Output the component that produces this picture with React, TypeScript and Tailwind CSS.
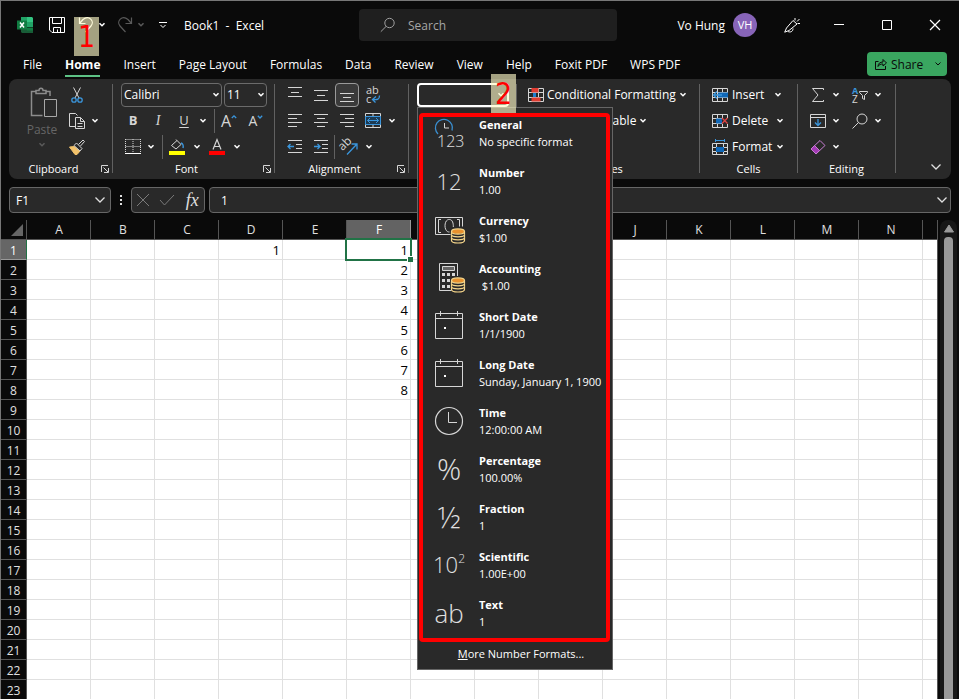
import type { ReactNode } from 'react';

const TABS = ['File', 'Home', 'Insert', 'Page Layout', 'Formulas', 'Data', 'Review', 'View', 'Help', 'Foxit PDF', 'WPS PDF'];
const COLUMNS = ['A', 'B', 'C', 'D', 'E', 'F', 'G', 'H', 'I', 'J', 'K', 'L', 'M', 'N'];
const ROWS = Array.from({ length: 23 }, (_, i) => i + 1);

const FORMATS = [
  { name: 'General', sample: 'No specific format', icon: <GeneralIcon /> },
  { name: 'Number', sample: '1.00', icon: <Glyph size="text-[22px]">12</Glyph> },
  { name: 'Currency', sample: '$1.00', icon: <CurrencyIcon /> },
  { name: 'Accounting', sample: '\u00a0$1.00', icon: <AccountingIcon /> },
  { name: 'Short Date', sample: '1/1/1900', icon: <CalendarIcon /> },
  { name: 'Long Date', sample: 'Sunday, January 1, 1900', icon: <CalendarIcon /> },
  { name: 'Time', sample: '12:00:00 AM', icon: <TimeIcon /> },
  { name: 'Percentage', sample: '100.00%', icon: <Glyph size="text-3xl">%</Glyph> },
  { name: 'Fraction', sample: '1', icon: <Glyph size="text-3xl">½</Glyph> },
  {
    name: 'Scientific',
    sample: '1.00E+00',
    icon: (
      <Glyph size="text-[22px]">
        10<sup className="text-xs -top-2.5">2</sup>
      </Glyph>
    ),
  },
  { name: 'Text', sample: '1', icon: <Glyph size="text-[26px]">ab</Glyph> },
];

function cellValue(col: string, row: number) {
  if (col === 'F' && row <= 8) return row;
  if (col === 'D' && row === 1) return 1;
  return '';
}

function Icon({ w = 16, h = 16, children }: { w?: number; h?: number; children: ReactNode }) {
  return (
    <svg width={w} height={h} viewBox={`0 0 ${w} ${h}`} fill="none" stroke="#d6d6d6" className="shrink-0 overflow-visible" aria-hidden="true">
      {children}
    </svg>
  );
}

function Chevron({ dim = false }: { dim?: boolean }) {
  return (
    <svg width="8" height="6" viewBox="0 0 8 6" fill="none" stroke={dim ? '#5a5a5a' : '#fff'} strokeWidth="1.5" className="shrink-0" aria-hidden="true">
      <path d="M1.5 1.2 4 3.7l2.5-2.5" />
    </svg>
  );
}

function WideChevron() {
  return (
    <svg width="12" height="8" viewBox="0 0 12 8" fill="none" stroke="#e0e0e0" strokeWidth="1.3" className="shrink-0" aria-hidden="true">
      <path d="m1.5 1.5 4.5 4.5 4.5-4.5" />
    </svg>
  );
}

function Glyph({ size, children }: { size: string; children: ReactNode }) {
  return <span className={`${size} font-light leading-none text-[#e0e0e0] whitespace-nowrap`}>{children}</span>;
}

function Coins() {
  return (
    <g stroke="#f5d58a" strokeWidth="1.2" fill="#292929">
      <path d="M17.5 15.5v9c0 1.5 3 2.5 6.5 2.5s6.5-1 6.5-2.5v-9" />
      <path d="M17.5 18.5c0 1.5 3 2.3 6.5 2.3s6.5-.8 6.5-2.3M17.5 21.5c0 1.5 3 2.3 6.5 2.3s6.5-.8 6.5-2.3" />
      <ellipse cx="24" cy="15.5" rx="6.5" ry="2.6" fill="#e8912d" />
    </g>
  );
}

function GeneralIcon() {
  return (
    <Icon w={32} h={32}>
      <path d="M5 17A8.5 8.5 0 1 1 19 13.5" stroke="#3a8fd0" strokeWidth="1.3" />
      <path d="M11.5 6v5H16" />
      <text x="4" y="30" fontSize="16" fill="#e0e0e0" stroke="none" fontWeight="300">123</text>
    </Icon>
  );
}

function CurrencyIcon() {
  return (
    <Icon w={30} h={28}>
      <path d="M28.5 11.5v-9h-27v17h15" />
      <path d="M7 4.5H4.5v13H7M23 4.5h2.5v7" />
      <path d="M15.5 17c-6 .5-6-13 0-12.5 3 0 4 4 3.8 7.5" />
      <g transform="translate(0 1)"><Coins /></g>
    </Icon>
  );
}

function AccountingIcon() {
  return (
    <Icon w={30} h={32}>
      <path d="M23.5 15V2.5h-18v27h12" />
      <path d="M8.5 5.5h12v4h-12z" fill="#666" />
      <path d="M8 12h3v3H8zM13 12h3v3h-3zM18 12h3v3h-3zM8 18h3v3H8zM13 18h3v3h-3zM8 24h3v3H8zM13 24h3v3h-3z" fill="#d6d6d6" stroke="none" />
      <g transform="translate(0 4)"><Coins /></g>
    </Icon>
  );
}

function CalendarIcon() {
  return (
    <Icon w={32} h={32}>
      <path d="M2.5 4.5h27v25h-27zM2.5 9.5h27M7.5 2v5M24.5 2v5" />
      <path d="M11 18h2v2h-2z" fill="#fff" stroke="none" />
    </Icon>
  );
}

function TimeIcon() {
  return (
    <Icon w={32} h={32}>
      <circle cx="16" cy="16" r="13.5" strokeWidth="1.2" />
      <path d="M15.5 7v10.5H24" />
    </Icon>
  );
}

function Lines({ rows }: { rows: [number, number, number][] }) {
  return (
    <Icon>
      {rows.map(([x1, x2, y]) => (
        <path key={y} d={`M${x1} ${y}.5H${x2}`} />
      ))}
    </Icon>
  );
}

function Tool({ label, width, children }: { label: string; width: string; children: ReactNode }) {
  return (
    <button aria-label={label} className={`${width} h-6 flex items-center justify-center shrink-0`}>
      {children}
    </button>
  );
}

function More({ label, dim }: { label: string; dim?: boolean }) {
  return (
    <button aria-label={label} className="w-3 h-6 flex items-center justify-center shrink-0">
      <Chevron dim={dim} />
    </button>
  );
}

function Rule() {
  return <div className="w-px h-6 bg-[#616161] shrink-0" />;
}

function Row({ children }: { children: ReactNode }) {
  return <div className="flex items-center h-[26px]">{children}</div>;
}

function Group({ label, width, pad, launcher, children }: { label?: string; width: string; pad: string; launcher?: boolean; children: ReactNode }) {
  return (
    <>
      <div className={`${width} shrink-0 flex flex-col pt-[3px]`}>
        <div className={`${pad} h-[78px]`}>{children}</div>
        <div className={`relative text-center leading-[18px] text-[11px] ${launcher ? 'pr-3.5' : ''}`}>
          {label}
          {launcher && (
            <button aria-label={`${label} settings`} className="absolute right-[2px] top-1">
              <Icon w={10} h={10}>
                <path d="M1.5 8V1.5H8M3.5 3.5 8 8M8.5 4v4.5H4" />
              </Icon>
            </button>
          )}
        </div>
      </div>
      <div className="w-px mt-[5px] mb-[6px] bg-[#616161] shrink-0" />
    </>
  );
}

function Dropdown({ label, value, width }: { label: string; value: string; width: string }) {
  return (
    <label className={`${width} relative flex items-center`}>
      <select aria-label={label} defaultValue={value} className="appearance-none w-full h-6 rounded border border-[#6b6b6b] bg-[#292929] px-[2px] text-xs leading-5">
        <option>{value}</option>
      </select>
      <span className="absolute right-[2px] pointer-events-none"><Chevron /></span>
    </label>
  );
}

function Callout({ place, children }: { place: string; children: ReactNode }) {
  return (
    <span className={`${place} absolute z-30 w-[25px] h-[39px] bg-[#fffbc8]/63 text-center text-[30px] leading-[39px] text-[#ff0000] font-['DejaVu_Sans_Condensed','DejaVu_Sans',sans-serif]`}>
      {children}
    </span>
  );
}

function TitleBar() {
  return (
    <header className="flex items-center h-12 shrink-0 text-xs">
      <div className="flex items-center w-[358px] shrink-0 pl-4">
        <svg width="16" height="16" viewBox="0 0 16 16" aria-hidden="true">
          <path d="M4 0h6v8H4z" fill="#21a366" />
          <path d="M10 0h5l1 1v4h-6z" fill="#33c481" />
          <path d="M4 4.5h6V12H4z" fill="#107c41" />
          <path d="M10 5h6v5h-6z" fill="#21a366" />
          <path d="M4 11h12v5H5l-1-1z" fill="#185c37" />
          <path d="M10 10.500h6v3h-6z" fill="#107c41" />
          <path d="M0 3.500h10v9H0z" fill="#107c41" />
          <path d="m3 5.500 4 5M7 5.500l-4 5" stroke="#fff" strokeWidth="1.500" />
        </svg>
        <button aria-label="Save" className="ml-4">
          <Icon>
            <path d="M.5.5h15v15H3L.5 13zM3.500.5v6h9v-6M4.500 15.500v-5h7v5M8.500 12.500v3" stroke="#fff" />
          </Icon>
        </button>
        <div className="relative ml-3 flex items-center">
          <button aria-label="Undo" className="w-[18px] flex justify-center">
            <Icon>
              <path d="M1.500.5v6h6M1.500 6.500 5 2.500c6-5 12 2 8 6.500L7.500 15" stroke="#fff" strokeWidth="1.2" />
            </Icon>
          </button>
          <span className="w-px" />
          <More label="Undo history" />
          <Callout place="-left-[3px] top-1">1</Callout>
        </div>
        <button aria-label="Redo" className="ml-[9px]">
          <Icon>
            <path d="M14.500.5v6h-6M14.500 6.500 11 2.500C5-2.500-1 4.500 3 9l5.500 6" stroke="#5a5a5a" strokeWidth="1.2" />
          </Icon>
        </button>
        <span className="w-[2px]" />
        <More label="Redo history" dim />
        <button aria-label="Customize toolbar" className="ml-3">
          <Icon w={8} h={8}>
            <path d="M0 1.500h8M1.500 4 4 6.500 6.500 4" stroke="#fff" />
          </Icon>
        </button>
        <h1 className="ml-[17px] pt-px whitespace-pre">Book1  -  Excel</h1>
      </div>
      <label className="flex items-center gap-3 w-[258px] h-8 rounded bg-[#1f1f1f] pl-[21px]">
        <Icon>
          <circle cx="9.5" cy="6" r="4.7" stroke="#a0a0a0" />
          <path d="M6 9.500.8 14.700" stroke="#a0a0a0" />
        </Icon>
        <input aria-label="Search" placeholder="Search" className="w-full pt-px bg-transparent placeholder:text-[#a6a6a6] text-xs outline-none" />
      </label>
      <div className="ml-auto flex items-center">
        <span className="pt-px">Vo Hung</span>
        <button className="ml-2 size-6 rounded-full bg-[#8764b8] text-[11px]">VH</button>
        <button aria-label="Drawing" className="ml-[27px]">
          <Icon>
            <path d="M9 3.500 2.500 11 .7 15.200 5 13.500l8-6.500zM4 14.500c2 1 5 .5 5-3M11 3.500V1M13 4.500 15.500 2M13.500 6.500H16" stroke="#fff" />
          </Icon>
        </button>
        <button aria-label="Minimize" className="ml-[34px]">
          <Icon w={10} h={10}><path d="M0 4.500h10" stroke="#fff" /></Icon>
        </button>
        <button aria-label="Maximize" className="ml-[38px]">
          <Icon w={10} h={10}><path d="M.5.5h9v9h-9z" stroke="#fff" /></Icon>
        </button>
        <button aria-label="Close" className="ml-[38px] mr-[19px]">
          <Icon w={10} h={10}><path d="m0 0 10 10M10 0 0 10" stroke="#fff" strokeWidth="1.2" /></Icon>
        </button>
      </div>
    </header>
  );
}

function TabBar() {
  return (
    <nav className="flex items-center h-[30px] shrink-0 pl-[22px] pr-3 text-xs">
      <div className="flex gap-[23px] whitespace-nowrap">
        {TABS.map((tab) => (
          <a key={tab} href="#" className={tab === 'Home' ? 'h-[26px] pt-1 leading-5 font-bold border-b-2 border-[#5dc285]' : 'h-[26px] pt-1 leading-5'}>
            {tab}
          </a>
        ))}
      </div>
      <button className="ml-auto flex items-center h-6 w-20 rounded bg-[#3aa660] text-[#0a0a0a] pl-2">
        <Icon w={12} h={12}>
          <path d="M3.500 3.500h-3v8h10V8M3 8.500c0-3 2-4.500 5-4.500V1.500L11.500 5 8 8V6C5.500 6 4 6.500 3 8.500z" stroke="#0a0a0a" />
        </Icon>
        <span className="ml-1 pt-px">Share</span>
        <svg width="8" height="6" viewBox="0 0 8 6" fill="none" stroke="#0a0a0a" className="ml-auto mr-[5px]" aria-hidden="true">
          <path d="M1.5 1.5 4 4l2.5-2.5" />
        </svg>
      </button>
    </nav>
  );
}

function FormatMenu() {
  return (
    <div id="formats" className="absolute left-0 top-6 z-20 w-[196px] border border-[#666] bg-[#292929] text-xs">
      <ul className="py-px">
        {FORMATS.map((format) => (
          <li key={format.name}>
            <button className="flex items-center w-full h-12 text-left whitespace-nowrap">
              <span className="w-[61px] pl-px shrink-0 flex justify-center">{format.icon}</span>
              <span className="leading-[17px] text-[11px]">
                <b className="block">{format.name}</b>
                {format.sample}
              </span>
            </button>
          </li>
        ))}
      </ul>
      <button className="block w-full h-[31px] pt-px pl-3 text-center text-[11px]">
        <u>M</u>ore Number Formats...
      </button>
      <div className="absolute left-px top-[5px] w-[191px] h-[529px] rounded border-4 border-[#ff0000] pointer-events-none" />
    </div>
  );
}

function Grid3({ children }: { children?: ReactNode }) {
  return (
    <Icon>
      <path d="M.5 1.5h15v13H.5zM.5 5.5h15M.5 10.5h15M5.5 1.5v13M10.5 1.5v13" />
      {children}
    </Icon>
  );
}

function Ribbon() {
  return (
    <div className="relative flex h-[100px] shrink-0 mx-2 rounded-lg bg-[#292929] text-xs">
      <Group label="Clipboard" width="w-[103px]" pad="flex pl-4" launcher>
        <button className="flex flex-col items-center w-[34px] pt-[5px] text-[#666]">
          <Icon w={24} h={32}>
            <path d="M5.5 4.5h-4v24h11M20 9V4.500h-4M6 6.500h10v-3h-3c0-3-4-3-4 0H6z" stroke="#8c8c8c" strokeWidth="1.500" />
            <path d="M14.500 12.500h12v17h-12z" stroke="#a8a8a8" />
          </Icon>
          <span className="mt-[3px] mb-1 leading-4">Paste</span>
          <Chevron dim />
        </button>
        <div className="pl-2">
          <Row>
            <Tool label="Cut" width="w-5">
              <Icon>
                <path d="M4.500.5 10 11M11.500.5 6 11" />
                <circle cx="5" cy="13" r="2.2" stroke="#3a96dd" strokeWidth="1.3" />
                <circle cx="11" cy="13" r="2.2" stroke="#3a96dd" strokeWidth="1.3" />
              </Icon>
            </Tool>
          </Row>
          <Row>
            <Tool label="Copy" width="w-5">
              <Icon>
                <path d="M6 13.500H.5V.5h6l2 2M6.500 4.500h5l4 4v7h-9zM11.500 4.500v4h4M8.500 10.500h5M8.500 13.500h5" />
              </Icon>
            </Tool>
            <span className="w-[2px]" />
            <More label="Copy options" />
          </Row>
          <Row>
            <Tool label="Format painter" width="w-5">
              <Icon>
                <path d="m.5 8 5-.5 5.500 4.500-3 3.500H6z" fill="#f2c26b" stroke="#f2c26b" />
                <path d="M5 6.500 7.500 4l5.500 5.500L11 12zM9.500 5.500 14 1l1.500 1.500L11.500 7" fill="#292929" />
              </Icon>
            </Tool>
          </Row>
        </div>
      </Group>

      <Group label="Font" width="w-[161px]" pad="pl-2" launcher>
        <Row>
          <div className="flex gap-[2px]">
            <Dropdown label="Font name" value="Calibri" width="w-[101px]" />
            <Dropdown label="Font size" value="11" width="w-[43px]" />
          </div>
        </Row>
        <Row>
          <Tool label="Bold" width="w-6"><b className="text-[13px] text-[#d6d6d6]">B</b></Tool>
          <Tool label="Italic" width="w-[26px]"><i className="text-sm text-[#d6d6d6] font-['Liberation_Serif',serif]">I</i></Tool>
          <Tool label="Underline" width="w-[26px]"><u className="text-[13px] text-[#d6d6d6] underline-offset-2">U</u></Tool>
          <More label="Underline style" />
          <span className="w-[5px]" />
          <Rule />
          <Tool label="Grow font" width="w-7">
            <span className="text-base text-[#d6d6d6]">A</span>
            <Icon w={6} h={14}><path d="M.8 4 3 1.800 5.200 4" stroke="#3a96dd" strokeWidth="1.3" /></Icon>
          </Tool>
          <Tool label="Shrink font" width="w-[26px]">
            <span className="text-sm text-[#d6d6d6]">A</span>
            <Icon w={6} h={14}><path d="M.8 1.800 3 4l2.200-2.200" stroke="#3a96dd" strokeWidth="1.3" /></Icon>
          </Tool>
        </Row>
        <Row>
          <Tool label="Borders" width="w-6">
            <Icon>
              <path d="M.5.5h15M.5 7.500h15M.5 0v13M8 0v13M15.500 0v13" strokeDasharray="1 1" />
              <path d="M0 14.500h16" stroke="#fff" />
            </Icon>
          </Tool>
          <More label="Border styles" />
          <span className="w-[5px]" />
          <Rule />
          <Tool label="Fill color" width="w-7">
            <Icon>
              <path d="m7 .5 5 5-5 4.500L2.500 6.500 8 1.500" />
              <path d="M12 4c2 .5 2.500 3 2 5" stroke="#3a96dd" strokeWidth="1.5" />
              <path d="M0 12h16v4H0z" fill="#ff0" stroke="none" />
            </Icon>
          </Tool>
          <More label="Fill colors" />
          <Tool label="Font color" width="w-7">
            <Icon>
              <path d="M4 10.500 8 .5l4 10M5.500 7.500h5" strokeWidth="1.2" />
              <path d="M0 12h16v4H0z" fill="#f00" stroke="none" />
            </Icon>
          </Tool>
          <More label="Font colors" />
        </Row>
      </Group>

      <Group label="Alignment" width="w-[133px]" pad="pl-[7px]" launcher>
        <Row>
          <Tool label="Top align" width="w-[26px]"><Lines rows={[[1, 15, 0], [4, 12, 5], [1, 15, 9]]} /></Tool>
          <Tool label="Middle align" width="w-[26px]"><Lines rows={[[1, 15, 3], [4, 12, 8], [1, 15, 13]]} /></Tool>
          <button aria-label="Bottom align" className="w-6 h-6 mx-px flex items-center justify-center rounded border border-[#9a9a9a] bg-[#3a3a3a]">
            <Lines rows={[[1, 15, 6], [4, 12, 10], [1, 15, 14]]} />
          </button>
          <Tool label="Wrap text" width="w-[26px]">
            <Icon>
              <text x="1" y="7" fontSize="11" fill="#d6d6d6" stroke="none">ab</text>
              <text x="1" y="16" fontSize="11" fill="#d6d6d6" stroke="none">c</text>
              <path d="M14.500 8.500c0 4-2 4.500-6.500 4M11 9.500l-3.500 3 3 3" stroke="#3a96dd" strokeWidth="1.3" />
            </Icon>
          </Tool>
        </Row>
        <Row>
          <Tool label="Align left" width="w-[26px]"><Lines rows={[[1, 15, 1], [1, 10, 5], [1, 15, 9], [1, 10, 13]]} /></Tool>
          <Tool label="Center" width="w-[26px]"><Lines rows={[[1, 15, 1], [4, 12, 5], [1, 15, 9], [4, 12, 13]]} /></Tool>
          <Tool label="Align right" width="w-[26px]"><Lines rows={[[1, 15, 1], [6, 15, 5], [1, 15, 9], [6, 15, 13]]} /></Tool>
          <Tool label="Merge and center" width="w-[26px]">
            <Icon>
              <path d="M.5.5h15v14H.5zM8 .5v3M8 11.500v3" />
              <path d="M.5 3.500h15v8H.5z" stroke="#3a96dd" fill="#1d3a52" />
              <path d="M2.500 7.500h11M5 5 2.500 7.500 5 10M11 5l2.500 2.500L11 10" stroke="#3a96dd" />
            </Icon>
          </Tool>
          <More label="Merge options" />
        </Row>
        <Row>
          <Tool label="Decrease indent" width="w-[26px]">
            <Icon>
              <path d="M1 1.500h14M9 5.500h6M9 9.500h6M1 13.500h14" />
              <path d="M1 7.500h6M3.500 5 1 7.500 3.500 10" stroke="#3a96dd" strokeWidth="1.3" />
            </Icon>
          </Tool>
          <Tool label="Increase indent" width="w-[26px]">
            <Icon>
              <path d="M1 1.500h14M9 5.500h6M9 9.500h6M1 13.500h14" />
              <path d="M1 7.500h6M4.500 5 7 7.500 4.500 10" stroke="#3a96dd" strokeWidth="1.3" />
            </Icon>
          </Tool>
          <Rule />
          <Tool label="Orientation" width="w-7">
            <Icon>
              <text x="-2" y="8" fontSize="12" fill="#d6d6d6" stroke="none" transform="rotate(-45 5 6)">ab</text>
              <path d="M6 15.500 15.500 5.500M10.500 5H16v5.500" stroke="#3a96dd" strokeWidth="1.3" />
            </Icon>
          </Tool>
          <More label="Orientation options" />
        </Row>
      </Group>

      <Group width="w-[107px]" pad="pl-2">
        <Row>
          <div className="relative flex items-center">
            <input role="combobox" aria-label="Number format" aria-expanded="true" aria-controls="formats" className="w-[92px] h-6 rounded border-2 border-white bg-[#292929] px-1 outline-none" />
            <span className="absolute right-1"><Chevron /></span>
            <FormatMenu />
            <Callout place="left-[74px] -top-[9px]">2</Callout>
          </div>
        </Row>
      </Group>

      <Group label="Styles" width="w-[182px]" pad="pl-[11px]">
        <Row>
          <button className="flex items-center gap-[3px] whitespace-nowrap">
            <Grid3>
              <path d="M3.500 1h7v4.500h-7zM3.500 10.500h9v4h-9z" fill="#e03c31" stroke="none" />
              <path d="M5 6h3v4H5z" fill="#1f7fd1" stroke="none" />
            </Grid3>
            Conditional Formatting
            <Chevron />
          </button>
        </Row>
        <Row>
          <button className="flex items-center gap-[3px] whitespace-nowrap">
            <Grid3 />
            Format as Table
            <Chevron />
          </button>
        </Row>
      </Group>

      <Group label="Cells" width="w-[97px]" pad="pl-3">
        <Row>
          <button className="flex items-center gap-1 w-[70px]">
            <Grid3>
              <path d="M6 5.500h10v5H6z" fill="#1068b8" stroke="none" />
              <path d="M10 8H1.500M5 4.500 1.500 8 5 11.500" stroke="#3a96dd" strokeWidth="1.3" />
            </Grid3>
            Insert
            <span className="ml-auto"><Chevron /></span>
          </button>
        </Row>
        <Row>
          <button className="flex items-center gap-1 w-[72px]">
            <Grid3>
              <path d="M4 5.500h6v5H4z" fill="#1068b8" stroke="none" />
              <path d="M10 5h6v6h-6z" fill="#292929" stroke="none" />
              <path d="m10 5 5.500 5.500M15.500 5 10 10.500" stroke="#e04545" strokeWidth="1.3" />
            </Grid3>
            Delete
            <span className="ml-auto"><Chevron /></span>
          </button>
        </Row>
        <Row>
          <button className="flex items-center gap-1 w-[70px]">
            <Icon>
              <path d="M.5 4.500h15v11H.5zM.5 8.500h15M.5 12.500h15M4.500 4.500v11M11.500 4.500v11" />
              <path d="M4 8h8v5H4z" fill="#1068b8" stroke="none" />
              <path d="M3.500 0v3M12.500 0v3M3.500 1.500h9" stroke="#3a96dd" />
            </Icon>
            Format
            <span className="ml-auto"><Chevron /></span>
          </button>
        </Row>
      </Group>

      <Group label="Editing" width="w-[97px]" pad="pl-2">
        <Row>
          <Tool label="Sum" width="w-6"><Icon><path d="M13.500 3V1.500h-11L8 8l-5.500 6.500h11V13" /></Icon></Tool>
          <More label="Sum options" />
          <span className="w-1.5" />
          <Tool label="Sort and filter" width="w-6">
            <Icon>
              <text x="0" y="7" fontSize="9" fontWeight="bold" fill="#3a96dd" stroke="none">A</text>
              <text x="0" y="16" fontSize="10" fill="#d6d6d6" stroke="none">Z</text>
              <path d="M7.500 4.500h8v1l-3 3v4l-2-1v-3l-3-3z" />
            </Icon>
          </Tool>
          <More label="Sort options" />
        </Row>
        <Row>
          <Tool label="Fill" width="w-6">
            <Icon>
              <path d="M.5 1.500h15v13H.5zM.5 4.500h15" />
              <path d="M8 6v6.500M5 9.500l3 3 3-3" stroke="#3a96dd" strokeWidth="1.3" />
            </Icon>
          </Tool>
          <More label="Fill options" />
          <span className="w-1.5" />
          <Tool label="Find" width="w-6">
            <Icon>
              <circle cx="10" cy="6" r="5" />
              <path d="M6.500 9.500.5 15.500" />
            </Icon>
          </Tool>
          <More label="Find options" />
        </Row>
        <Row>
          <Tool label="Clear" width="w-6">
            <Icon>
              <path d="M10 1.500 15 6.500 6 15 1 10z" stroke="#c77dd3" />
              <path d="M4.500 6.500 1 10l5 5 3.500-3.500z" fill="#a33bb5" stroke="#c77dd3" />
            </Icon>
          </Tool>
          <More label="Clear options" />
        </Row>
      </Group>
      <button aria-label="Collapse ribbon" className="ml-auto mr-[9px] mb-2 self-end"><WideChevron /></button>
    </div>
  );
}

function FormulaBar() {
  return (
    <div className="flex items-center h-[26px] shrink-0 mx-2 mt-2 mb-[7px] text-xs">
      <label className="relative flex items-center w-[102px] h-full shrink-0">
        <input aria-label="Name box" defaultValue="F1" className="w-full h-full rounded border border-[#666] bg-[#292929] px-1.5" />
        <span className="absolute right-[5px]"><WideChevron /></span>
      </label>
      <span className="w-5 flex flex-col items-center gap-[2px]">
        <i className="size-[2px] bg-[#e0e0e0]" />
        <i className="size-[2px] bg-[#e0e0e0]" />
        <i className="size-[2px] bg-[#e0e0e0]" />
      </span>
      <div className="flex items-center justify-around w-[74px] h-full shrink-0 rounded border border-[#666] bg-[#292929]">
        <button aria-label="Cancel"><Icon w={12} h={12}><path d="m0 0 12 12M12 0 0 12" stroke="#7a7a7a" /></Icon></button>
        <button aria-label="Enter"><Icon><path d="m1 8 4.500 5L15 3" stroke="#7a7a7a" /></Icon></button>
        <button aria-label="Insert function" className="font-['Liberation_Serif',serif] italic text-lg leading-5 text-[#e0e0e0]">fx</button>
      </div>
      <label className="relative flex items-center flex-1 h-full ml-1">
        <input aria-label="Formula" defaultValue="1" className="w-full h-full rounded border border-[#666] bg-[#292929] px-[11px]" />
        <span className="absolute right-[3px]"><WideChevron /></span>
      </label>
    </div>
  );
}

function Sheet() {
  return (
    <div className="flex flex-1 min-h-0 pr-[2px]">
      <div className="flex-1 min-w-0 overflow-hidden border-r border-[#555]">
        <table className="table-fixed w-full border-separate border-spacing-0 text-[13px] leading-[17px]">
          <colgroup>
            <col className="w-[26px]" />
            {COLUMNS.map((col) => <col key={col} className="w-16" />)}
            <col />
          </colgroup>
          <thead>
            <tr className="h-5">
              <th aria-label="Select all" className="p-0 border-r border-b border-[#555]">
                <svg width="12" height="12" viewBox="0 0 12 12" className="ml-auto mr-[3px]" aria-hidden="true"><path d="M12 0v12H0z" fill="#666" /></svg>
              </th>
              {COLUMNS.map((col) => (
                <th key={col} className={`p-0 pl-px font-normal text-xs leading-[19px] border-r border-b ${col === 'F' ? 'bg-[#636363] border-[#999]' : 'border-[#555] text-[#e0e0e0]'}`}>
                  {col}
                </th>
              ))}
              <th className="p-0 border-b border-[#555]" />
            </tr>
          </thead>
          <tbody className="bg-white text-black">
            {ROWS.map((row) => (
              <tr key={row} className="h-5">
                <th className={`p-0 pt-[2px] font-normal text-xs leading-[17px] border-r border-b ${row === 1 ? 'bg-[#666] text-white border-b-[#999] border-r-[#217346]' : 'bg-[#0a0a0a] text-[#e0e0e0] border-[#555]'}`}>
                  {row}
                </th>
                {COLUMNS.map((col) => (
                  <td key={col} className="relative p-0 pt-[2px] pr-[2px] text-right border-r border-b border-[#e0e0e0]">
                    {cellValue(col, row)}
                    {col === 'F' && row === 1 && (
                      <span className="absolute z-10 -inset-[2px] border-2 border-[#217346]">
                        <i className="absolute -right-[3px] -bottom-[3px] size-[6px] border-t border-l border-white bg-[#217346]" />
                      </span>
                    )}
                  </td>
                ))}
                <td className="p-0 border-b border-[#e0e0e0]" />
              </tr>
            ))}
          </tbody>
        </table>
      </div>
      <div className="w-[17px] ml-[2px] flex flex-col items-center rounded-t-lg bg-[#171717] pt-[5px]">
        <button aria-label="Scroll up">
          <svg width="10" height="8" viewBox="0 0 10 8" aria-hidden="true"><path d="M5 0 9.500 7h-9z" fill="#999" stroke="#999" /></svg>
        </button>
        <div className="flex-1 w-[9px] mt-1 rounded-t bg-[#999]" />
      </div>
    </div>
  );
}

export default function App() {
  return (
    <div className="flex flex-col h-screen overflow-hidden border-l border-t border-[#777] bg-[#0a0a0a] text-white font-['Open_Sans','Noto_Sans',sans-serif]">
      <TitleBar />
      <TabBar />
      <Ribbon />
      <FormulaBar />
      <Sheet />
    </div>
  );
}
